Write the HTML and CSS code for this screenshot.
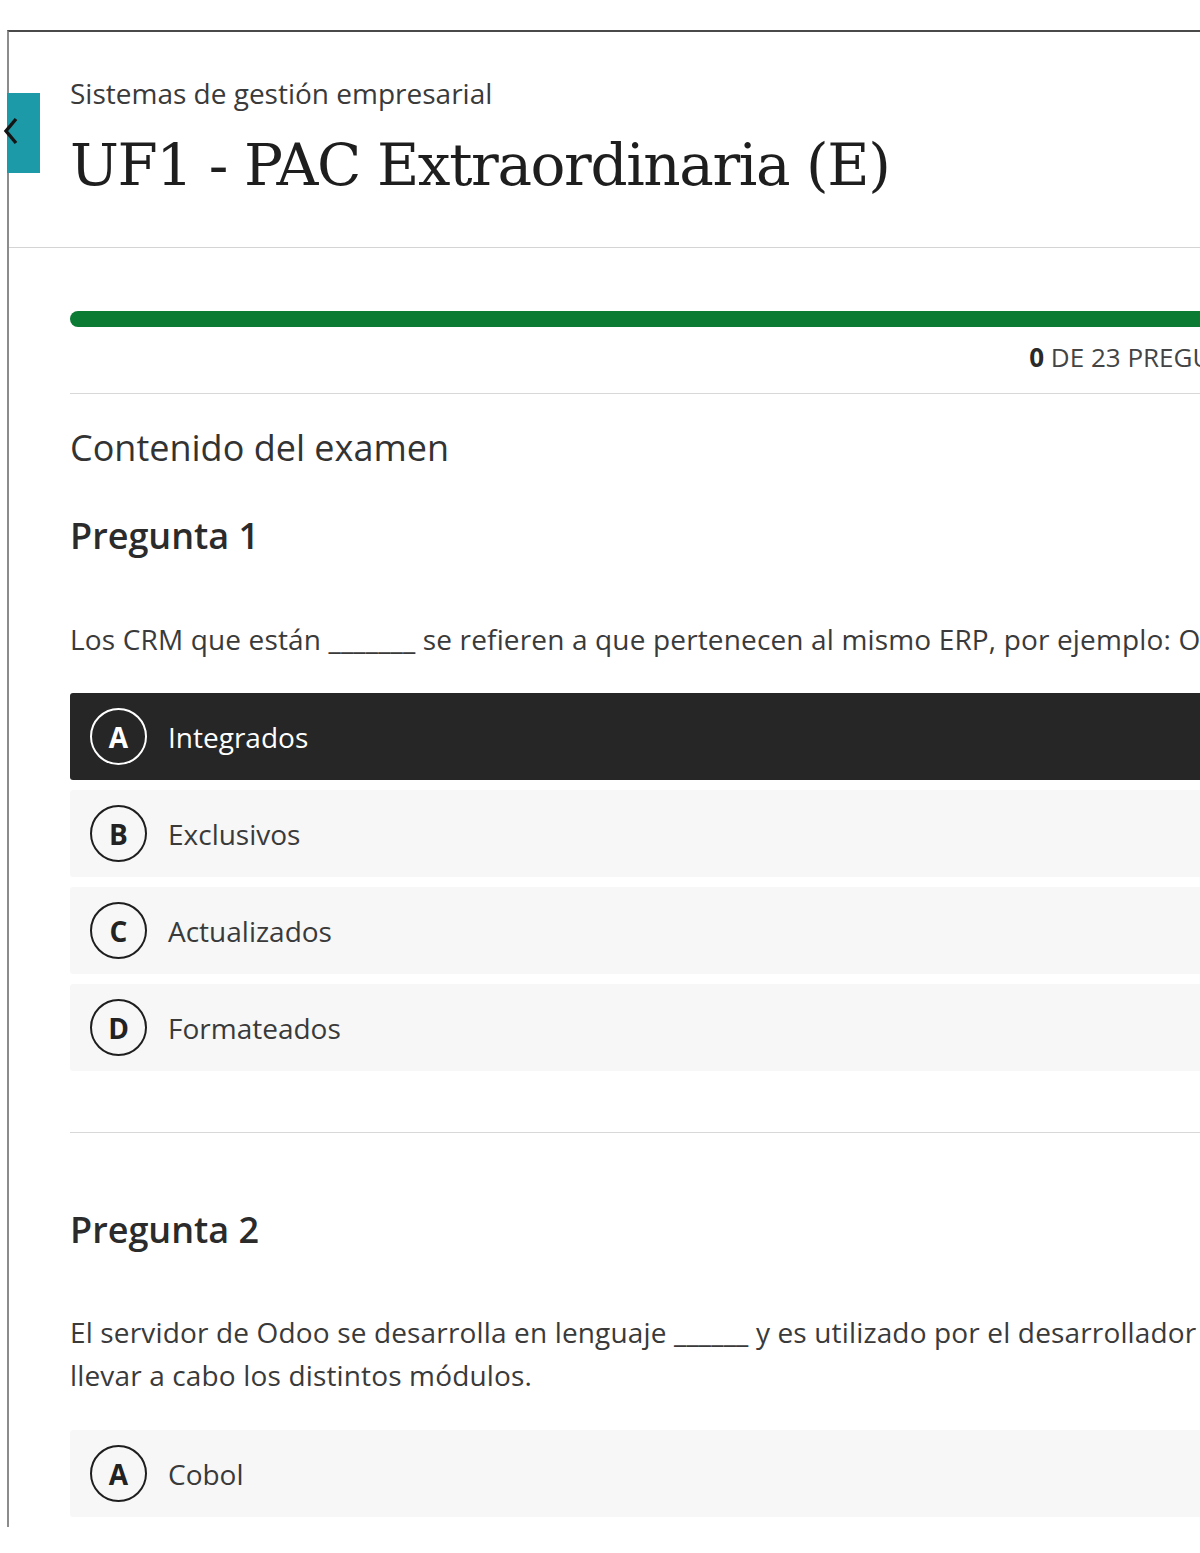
FILE: index.html
```html
<!DOCTYPE html>
<html lang="es">
<head>
<meta charset="utf-8">
<title>UF1 - PAC Extraordinaria (E)</title>
<link rel="stylesheet" href="styles.css">
</head>
<body>
<div class="window">
  <button class="side-tab" aria-label="Cerrar">
    <svg class="chev" width="20" height="30" viewBox="0 0 20 30"><polyline points="14,2 4,14 14,26" fill="none" stroke="#151515" stroke-width="3.4"/></svg>
  </button>
  <div class="frame">
    <header class="page-header">
      <div class="course">Sistemas de gestión empresarial</div>
      <h1 class="title">UF1 - PAC Extraordinaria (E)</h1>
    </header>
    <main class="content">
      <section class="progress">
        <div class="bar"></div>
        <div class="progress-meta"><b>0</b> DE 23 PREGUNTAS</div>
      </section>
      <h2 class="section-title">Contenido del examen</h2>

      <section class="question">
        <h3 class="q-title">Pregunta 1</h3>
        <p class="q-text">Los CRM que están _______ se refieren a que pertenecen al mismo ERP, por ejemplo: Odoo.</p>
        <ul class="options">
          <li class="option selected"><span class="letter">A</span><span class="label">Integrados</span></li>
          <li class="option"><span class="letter">B</span><span class="label">Exclusivos</span></li>
          <li class="option"><span class="letter">C</span><span class="label">Actualizados</span></li>
          <li class="option"><span class="letter">D</span><span class="label">Formateados</span></li>
        </ul>
      </section>

      <section class="question second">
        <h3 class="q-title">Pregunta 2</h3>
        <p class="q-text">El servidor de Odoo se desarrolla en lenguaje ______ y es utilizado por el desarrollador para llevar a cabo los distintos módulos.</p>
        <ul class="options">
          <li class="option"><span class="letter">A</span><span class="label">Cobol</span></li>
          <li class="option"><span class="letter">B</span><span class="label">Python</span></li>
        </ul>
      </section>
    </main>
  </div>
</div>
</body>
</html>
```

FILE: styles.css
```css
html, body {
  margin: 0;
  padding: 0;
  overflow: hidden;
  background: #ffffff;
}
body {
  font-family: "Open Sans", "Noto Sans", sans-serif;
  color: #333333;
  width: 1200px;
  height: 1553px;
}
.window {
  position: relative;
  padding-top: 30px;
  padding-left: 7px;
}
.frame {
  width: 1400px;
  height: 1495px;
  border-top: 2px solid #4a4a4a;
  border-left: 2px solid #8c8c8c;
  overflow: hidden;
}
.side-tab {
  position: absolute;
  left: 7px;
  top: 93px;
  width: 33px;
  height: 80px;
  border: 0;
  padding: 0;
  background: #1c9aa8;
  overflow: visible;
}
.chev {
  position: absolute;
  left: -5px;
  top: 24px;
  overflow: visible;
}
.page-header {
  padding: 43px 0 47px 61px;
  border-bottom: 1px solid #d4d4d4;
}
.course {
  font-size: 28px;
  line-height: 36px;
  color: #3a3a3a;
}
.title {
  margin: 19px 0 0;
  font-family: "DejaVu Serif", "Liberation Serif", serif;
  font-weight: normal;
  font-size: 58px;
  line-height: 70px;
  letter-spacing: -1.4px;
  color: #1e1e1e;
}
.content {
  width: 1240px;
  padding-left: 61px;
}
.progress {
  padding-top: 63px;
  padding-bottom: 19px;
  border-bottom: 1px solid #d8d8d8;
}
.bar {
  height: 16px;
  background: #0b7a32;
  border-radius: 8px;
}
.progress-meta {
  margin-top: 13px;
  padding-right: 34px;
  text-align: right;
  font-size: 26px;
  line-height: 34px;
  color: #444444;
}
.progress-meta b {
  font-weight: 700;
  color: #2a2a2a;
}
.section-title {
  margin: 32px 0 0;
  font-size: 36px;
  line-height: 44px;
  font-weight: 400;
  color: #333333;
}
.q-title {
  margin: 44px 0 0;
  font-size: 36px;
  line-height: 44px;
  font-weight: 600;
  color: #2b2b2b;
}
.q-text {
  margin: 60px 0 0;
  font-size: 28px;
  line-height: 43px;
  letter-spacing: 0.15px;
  color: #3a3a3a;
}
.options {
  list-style: none;
  margin: 32px 0 0;
  padding: 0;
  display: flex;
  flex-direction: column;
  gap: 10px;
}
.option {
  height: 87px;
  display: flex;
  align-items: center;
  gap: 21px;
  padding-left: 20px;
  background: #f7f7f7;
  border-radius: 3px;
  color: #3a3a3a;
  font-size: 28px;
}
.option.selected {
  background: #262626;
  color: #ffffff;
}
.letter {
  box-sizing: border-box;
  width: 57px;
  height: 57px;
  border: 2.5px solid #1e1e1e;
  border-radius: 50%;
  display: flex;
  align-items: center;
  justify-content: center;
  font-weight: 700;
  font-size: 28px;
  color: #222222;
}
.option.selected .letter {
  border-color: #ffffff;
  color: #ffffff;
}
.question {
  padding-bottom: 61px;
  border-bottom: 1px solid #d8d8d8;
}
.question.second {
  border-bottom: 0;
}
.question.second .q-title {
  margin-top: 75px;
}
.question.second .q-text {
  margin-top: 59px;
}
.question.second .options {
  margin-top: 33px;
}
```
